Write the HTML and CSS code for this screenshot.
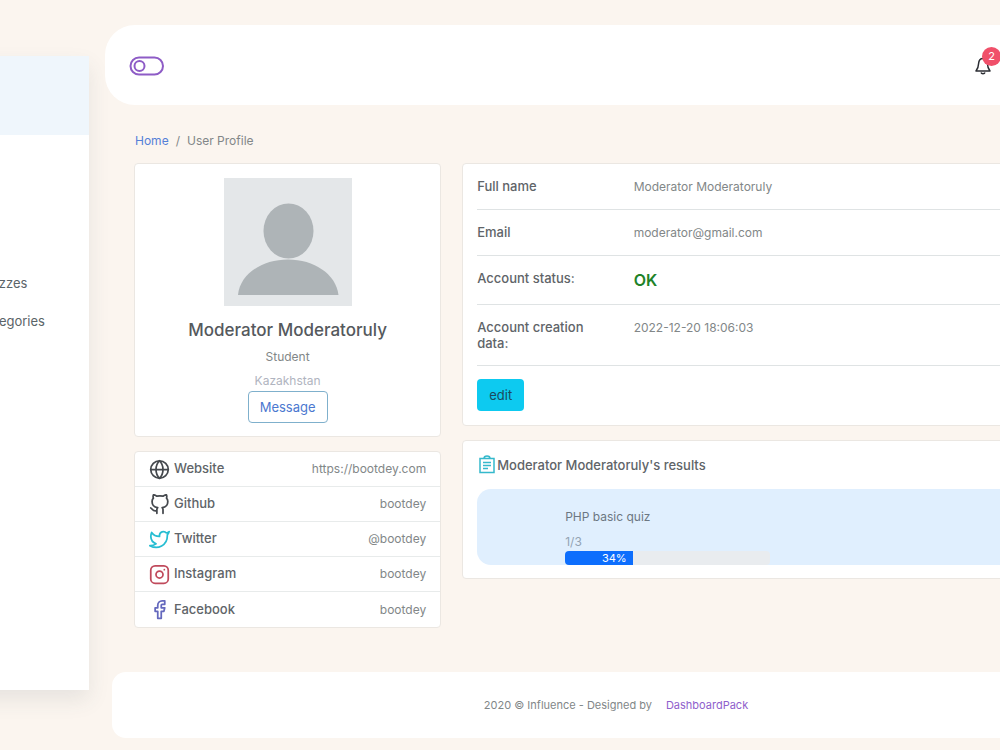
FILE: index.html
```
<!DOCTYPE html>
<html lang="en">
<head>
  <meta charset="UTF-8" />
  <meta name="viewport" content="width=device-width, initial-scale=1.0"/>
  <title>User Profile</title>
  <link rel="stylesheet" href="styles.css">
</head>
<body>
  <div class="page">
    <nav class="sidebar">
      <div class="sidebar-logo"></div>
      <ul class="sidebar-menu">
        <li><a href="#">Quizzes</a></li>
        <li><a href="#">Categories</a></li>
      </ul>
    </nav>

    <div class="main">
      <header class="header">
        <button class="icon-btn" aria-label="Toggle menu">
          <svg width="36" height="20" viewBox="0 0 36 20" fill="none" stroke="#8e5cc6" stroke-width="2">
            <rect x="1.5" y="1.5" width="32.5" height="17" rx="8.5"/>
            <circle cx="10.5" cy="10" r="5"/>
          </svg>
        </button>
        <button class="icon-btn bell-btn" aria-label="Notifications">
          <svg width="16" height="18" viewBox="0 0 16 18" fill="none" stroke="#2b2d33" stroke-width="1.5" stroke-linejoin="round">
            <path d="M8 1.500C5.500 1.500 3.800 3.500 3.600 6.500C3.500 9.500 3 11.500 1 14h14C13 11.500 12.500 9.500 12.400 6.500C12.200 3.500 10.500 1.500 8 1.500z"/>
            <path d="M6 15.500c.5 1.500 3.500 1.500 4 0"/>
          </svg>
          <span class="badge">2</span>
        </button>
      </header>

      <div class="content">
        <nav class="breadcrumb">
          <a href="#">Home</a>
          <span>/</span>
          <span>User Profile</span>
        </nav>

        <div class="columns">
          <div class="col-left">
            <div class="card profile">
              <svg class="avatar" width="128" height="128" viewBox="0 0 128 128">
                <rect width="128" height="128" fill="#e4e7e9"/>
                <ellipse cx="64.500" cy="53" rx="25" ry="27.500" fill="#aeb4b7"/>
                <path d="M14 117C16 96 38 81.500 64 81.500S112 96 114.500 117z" fill="#aeb4b7"/>
              </svg>
              <h4>Moderator Moderatoruly</h4>
              <p class="role">Student</p>
              <p class="place">Kazakhstan</p>
              <button class="btn btn-outline">Message</button>
            </div>

            <ul class="card links">
              <li>
                <svg viewBox="0 0 24 24" stroke="#45494e"><circle cx="12" cy="12" r="10"/><path d="M2 12h20M12 2c3 3 4 6.500 4 10s-1 7-4 10c-3-3-4-6.500-4-10s1-7 4-10z"/></svg>
                <h6>Website</h6>
                <span>https://bootdey.com</span>
              </li>
              <li>
                <svg viewBox="0 0 24 24" stroke="#45494e"><path d="M9 19c-5 1.500-5-2.500-7-3m14 6v-3.870a3.370 3.370 0 0 0-.94-2.610c3.140-.35 6.440-1.540 6.440-7A5.440 5.440 0 0 0 20 4.770 5.070 5.070 0 0 0 19.910 1S18.730.65 16 2.480a13.380 13.380 0 0 0-7 0C6.270.65 5.090 1 5.090 1A5.070 5.070 0 0 0 5 4.770a5.440 5.440 0 0 0-1.500 3.780c0 5.420 3.300 6.610 6.440 7A3.370 3.370 0 0 0 9 18.130V22"/></svg>
                <h6>Github</h6>
                <span>bootdey</span>
              </li>
              <li>
                <svg viewBox="0 0 24 24" stroke="#26bdd2"><path d="M23 3a10.900 10.900 0 0 1-3.140 1.530 4.480 4.480 0 0 0-7.860 3v1A10.660 10.660 0 0 1 3 4s-4 9 5 13a11.640 11.640 0 0 1-7 2c9 5 20 0 20-11.500a4.500 4.500 0 0 0-.08-.83A7.720 7.720 0 0 0 23 3z"/></svg>
                <h6>Twitter</h6>
                <span>@bootdey</span>
              </li>
              <li>
                <svg viewBox="0 0 24 24" stroke="#c04a5c"><rect x="2" y="2" width="20" height="20" rx="5"/><circle cx="12" cy="12" r="4"/><path d="M17.500 6.500h.01"/></svg>
                <h6>Instagram</h6>
                <span>bootdey</span>
              </li>
              <li>
                <svg viewBox="0 0 24 24" stroke="#6468bd"><path d="M18 2h-3a5 5 0 0 0-5 5v3H7v4h3v8h4v-8h3l1-4h-4V7a1 1 0 0 1 1-1h3z"/></svg>
                <h6>Facebook</h6>
                <span>bootdey</span>
              </li>
            </ul>
          </div>

          <div class="col-right">
            <div class="card details">
              <dl>
                <div class="row"><dt>Full name</dt><dd>Moderator Moderatoruly</dd></div>
                <div class="row"><dt>Email</dt><dd>moderator@gmail.com</dd></div>
                <div class="row"><dt>Account status:</dt><dd class="ok">OK</dd></div>
                <div class="row"><dt>Account creation data:</dt><dd>2022-12-20 18:06:03</dd></div>
              </dl>
              <button class="btn btn-info">edit</button>
            </div>

            <div class="card results">
              <h6>
                <svg width="20" height="20" viewBox="0 0 20 20" fill="none" stroke="#35b9cc" stroke-width="1.500">
                  <path d="M3 3.500h14v14H3zM7 3.500a3 2.500 0 0 1 6 0M6 7.500h8M6 10.500h8M6 13.500h5"/>
                </svg>
                Moderator Moderatoruly's results
              </h6>
              <div class="quiz">
                <p class="quiz-name">PHP basic quiz</p>
                <p class="quiz-score">1/3</p>
                <div class="progress">
                  <div class="progress-bar" style="width: 33%">34%</div>
                </div>
              </div>
            </div>
          </div>
        </div>
      </div>

      <footer class="footer">
        <span>2020 © Influence - Designed by</span>
        <a href="#">DashboardPack</a>
      </footer>
    </div>
  </div>
</body>
</html>
```
FILE: styles.css
```
* {
  box-sizing: border-box;
}

body {
  margin: 0;
  font-family: Inter, "Open Sans", sans-serif;
  font-size: 12px;
  line-height: 16px;
  color: #828788;
  background: #fbf5ef;
  overflow: hidden;
}

h4, h6, p, ul, dl, dd {
  margin: 0;
  padding: 0;
}

ul {
  list-style: none;
}

a {
  text-decoration: none;
}

button {
  font-family: inherit;
  cursor: pointer;
}

/* the layout is wider than the window on both sides */
.page {
  display: flex;
  align-items: flex-start;
  width: calc(100% + 300px);
  min-height: 100vh;
  margin-left: -180px;
}

.sidebar {
  flex: none;
  width: 269px;
  height: calc(100vh - 116px);
  margin-top: 56px;
  background: #fff;
  box-shadow: 0 10px 20px rgba(60, 80, 90, 0.1);
}

.sidebar-logo {
  height: 79px;
  background: #eff6fc;
}

.sidebar-menu {
  padding: 136px 0 0 158px;
}

.sidebar-menu li {
  margin-bottom: 14px;
}

.sidebar-menu a {
  display: block;
  font-size: 13px;
  line-height: 24px;
  color: #5a6468;
}

.main {
  flex: 1;
  margin-left: 16px;
  padding-top: 25px;
}

.header {
  display: flex;
  align-items: center;
  justify-content: space-between;
  height: 80px;
  padding: 2px 129px 0 24px;
  background: #fff;
  border-radius: 30px;
}

.icon-btn {
  display: flex;
  padding: 0;
  border: none;
  background: none;
}

.bell-btn {
  position: relative;
}

.badge {
  position: absolute;
  top: -10px;
  left: 7px;
  width: 19px;
  height: 19px;
  border-radius: 50%;
  background: #f0506a;
  color: #fff;
  font-size: 11px;
  line-height: 19px;
  text-align: center;
}

.content {
  padding: 28px 26px 0 29px;
}

.breadcrumb {
  display: flex;
  gap: 7px;
  margin-bottom: 14px;
  padding-left: 1px;
}

.breadcrumb a {
  color: #5580d8;
}

.columns {
  display: flex;
  gap: 21px;
}

.col-left {
  width: 32%;
}

.col-right {
  flex: 1;
}

.card {
  margin-bottom: 14px;
  background: #fff;
  border: 1px solid #ebe7e2;
  border-radius: 4px;
}

.profile {
  display: flex;
  flex-direction: column;
  align-items: center;
  padding: 14px 14px 13px;
}

.profile h4 {
  margin-top: 14px;
  font-size: 17px;
  font-weight: 500;
  line-height: 20px;
  color: #55595d;
}

.role {
  margin: 9px 0 8px;
}

.place {
  margin-bottom: 2px;
  color: #b0b4c0;
}

.btn {
  height: 32px;
  padding: 0 11px;
  border: 1px solid transparent;
  border-radius: 4px;
  font-size: 13px;
}

.btn-outline {
  border-color: #7fb0cc;
  background: #fff;
  color: #4b78d0;
}

.btn-info {
  margin-top: 13px;
  background: #0dcaf0;
  color: #1c4a5c;
}

.links li {
  display: flex;
  align-items: center;
  height: 35px;
  padding: 0 14px;
  border-bottom: 1px solid #e8ebeb;
}

.links li:last-child {
  border-bottom: none;
}

.links svg {
  width: 21px;
  height: 21px;
  margin-right: 4px;
  fill: none;
  stroke-width: 2;
  stroke-linecap: round;
  stroke-linejoin: round;
}

h6, dt {
  font-size: 13px;
  font-weight: 500;
  line-height: 16px;
  color: #606468;
}

.links h6 {
  padding-bottom: 2px;
}

.links span {
  margin-left: auto;
}

.details {
  padding: 0 14px 14px;
}

.row {
  display: flex;
  padding: 14px 0;
  border-bottom: 1px solid #dfe3e4;
}

.row dt {
  width: 26%;
  padding-right: 21px;
}

.row dd {
  flex: 1;
  line-height: 17px;
}

.row .ok {
  font-size: 16px;
  font-weight: 600;
  line-height: 20px;
  color: #208228;
}

.results {
  padding: 14px 14px 13px;
}

.results h6 {
  display: flex;
  align-items: center;
  height: 20px;
  margin-bottom: 14px;
}

.quiz {
  height: 76px;
  padding: 20px 88px 0;
  border-radius: 14px;
  background: #e0effe;
}

.quiz-name {
  color: #6c7782;
}

.quiz-score {
  margin-top: 9px;
  color: #93a3b3;
}

.progress {
  width: 48%;
  height: 14px;
  margin-top: 1px;
  border-radius: 4px;
  background: #e9ecef;
  overflow: hidden;
}

.progress-bar {
  height: 100%;
  padding-right: 6px;
  background: #0d6efd;
  color: #fff;
  font-size: 11px;
  line-height: 14px;
  text-align: right;
}

.footer {
  display: flex;
  align-items: center;
  justify-content: center;
  gap: 14px;
  height: 66px;
  margin: 30px 0 0 7px;
  border-radius: 14px;
  background: #fff;
  font-size: 11px;
}

.footer a {
  color: #8f60cc;
}
```
